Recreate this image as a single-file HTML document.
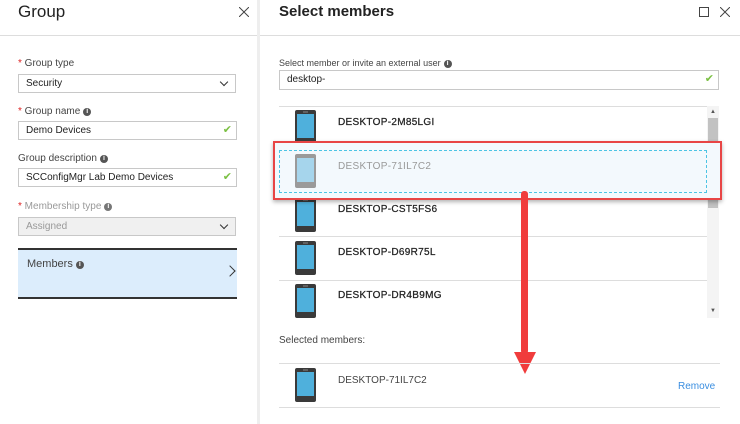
<!DOCTYPE html><html><head><style>
*{margin:0;padding:0;box-sizing:border-box}
body{width:740px;height:424px;background:#fff;font-family:"Segoe UI","Liberation Sans",sans-serif;position:relative;overflow:hidden;color:#333}
.a{position:absolute}
.t{font-size:10px;color:#444;white-space:nowrap}
.inp{position:absolute;border:1px solid #c8c8c8;background:#fff;height:19px;font-size:10px;padding:0 7px;line-height:17px;color:#222}
.req{color:#d22}
.i{display:inline-block;width:8px;height:8px;border-radius:50%;background:#555;color:#fff;font-size:7px;line-height:8px;text-align:center;font-weight:bold;vertical-align:1px;margin-left:3px}
.chk{position:absolute;right:4px;top:0;color:#7bc043;font-size:11px}
.dn{font-size:10px;color:#222;letter-spacing:.3px;-webkit-text-stroke:.25px #222}
.hl{position:absolute;height:1px;background:#ddd}
.chev{position:absolute;right:8px;top:4px;width:6px;height:6px;border-right:1px solid #333;border-bottom:1px solid #333;transform:rotate(45deg)}
</style></head><body>
<div class="a" style="left:257px;top:0;width:3px;height:424px;background:#eee"></div>
<div class="a" style="left:18px;top:2px;font-size:17px;color:#222">Group</div>
<svg class="a" style="left:239px;top:7px" width="10" height="10"><path d="M0 0L10 10M10 0L0 10" stroke="#444" stroke-width="1"/></svg>
<div class="hl" style="left:0;top:35px;width:257px"></div>
<div class="a t" style="left:18px;top:58px"><span class="req">*</span> Group type</div>
<div class="inp" style="left:18px;top:74px;width:218px">Security<span class="chev"></span></div>
<div class="a t" style="left:18px;top:106px"><span class="req">*</span> Group name<span class="i">i</span></div>
<div class="inp" style="left:18px;top:121px;width:219px">Demo Devices<span class="chk">✔</span></div>
<div class="a t" style="left:18px;top:153px">Group description<span class="i">i</span></div>
<div class="inp" style="left:18px;top:168px;width:219px">SCConfigMgr Lab Demo Devices<span class="chk">✔</span></div>
<div class="a t" style="left:18px;top:201px;color:#999"><span class="req">*</span> Membership type<span class="i" style="background:#777">i</span></div>
<div class="inp" style="left:18px;top:217px;width:218px;background:#f0f0f0;color:#999">Assigned<span class="chev"></span></div>
<div class="a" style="left:18px;top:248px;width:219px;height:51px;background:#dcedfc;border-top:2px solid #333;border-bottom:2px solid #333"></div>
<div class="a t" style="left:27px;top:258px;font-size:11px">Members<span class="i">i</span></div>
<div class="a" style="left:226px;top:267px;width:8px;height:8px;border-right:1px solid #333;border-top:1px solid #333;transform:rotate(45deg)"></div>

<div class="a" style="left:279px;top:3px;font-size:15px;font-weight:600;color:#222">Select members</div>
<div class="a" style="left:699px;top:7px;width:10px;height:10px;border:1px solid #444"></div>
<svg class="a" style="left:720px;top:7px" width="10" height="10"><path d="M0 0L10 10M10 0L0 10" stroke="#444" stroke-width="1"/></svg>
<div class="hl" style="left:260px;top:35px;width:480px"></div>
<div class="a t" style="left:279px;top:58px;font-size:9px">Select member or invite an external user<span class="i">i</span></div>
<div class="inp" style="left:279px;top:70px;width:440px;height:20px">desktop-<span class="chk">✔</span></div>

<div class="hl" style="left:279px;top:106px;width:428px"></div>
<div class="hl" style="left:279px;top:236px;width:428px"></div>
<div class="hl" style="left:279px;top:280px;width:428px"></div>
<div class="a" style="left:707px;top:106px;width:12px;height:212px;background:#f4f4f4"></div>
<div class="a" style="left:708px;top:118px;width:10px;height:90px;background:#c2c2c2"></div>
<div class="a" style="left:710px;top:109px;font-size:6px;color:#555">▲</div>
<div class="a" style="left:710px;top:308px;font-size:6px;color:#555">▼</div>

<svg class="a" style="left:0;top:0" width="740" height="424">
<defs><g id="ph"><rect x="0" y="0" width="21" height="34" rx="2" fill="#3a3a3a"/><rect x="2" y="4" width="17" height="24" fill="#4fb0dc"/><rect x="8" y="1.5" width="5" height="1" fill="#888"/></g></defs>
<use href="#ph" x="295" y="110"/>
<use href="#ph" x="295" y="198"/>
<use href="#ph" x="295" y="241"/>
<use href="#ph" x="295" y="284"/>
<use href="#ph" x="295" y="368"/>
</svg>
<div class="a dn" style="left:338px;top:117px">DESKTOP-2M85LGI</div>
<div class="a dn" style="left:338px;top:204px">DESKTOP-CST5FS6</div>
<div class="a dn" style="left:338px;top:247px">DESKTOP-D69R75L</div>
<div class="a dn" style="left:338px;top:290px">DESKTOP-DR4B9MG</div>

<div class="a" style="left:273px;top:141px;width:449px;height:59px;border:2px solid #e84545;background:#f3f9fd;box-shadow:0 2px 4px rgba(0,0,0,.3)"></div>
<div class="a" style="left:279px;top:150px;width:428px;height:43px;border:1px dashed #4cc4e4"></div>
<svg class="a" style="left:295px;top:154px" width="21" height="34"><rect width="21" height="34" rx="2" fill="#9a9a9a"/><rect x="2" y="4" width="17" height="24" fill="#a6d5ec"/></svg>
<div class="a dn" style="left:338px;top:161px;color:#999;-webkit-text-stroke:0">DESKTOP-71IL7C2</div>

<svg class="a" style="left:0;top:0" width="740" height="424">
<rect x="521" y="191" width="7" height="163" rx="3" fill="#f03c3c"/>
<polygon points="514,352 536,352 525,374" fill="#f03c3c"/>
</svg>

<div class="a t" style="left:279px;top:335px">Selected members:</div>
<div class="hl" style="left:279px;top:363px;width:441px"></div>
<div class="a t" style="left:338px;top:375px">DESKTOP-71IL7C2</div>
<div class="a t" style="left:678px;top:381px;color:#3a8ee0">Remove</div>
<div class="hl" style="left:279px;top:407px;width:441px"></div>
</body></html>
